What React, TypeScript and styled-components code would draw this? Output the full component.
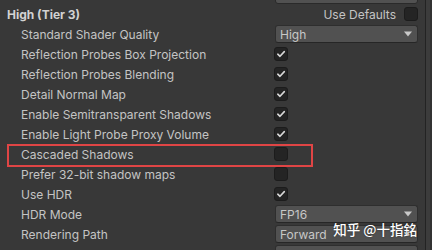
import { styled, createGlobalStyle } from "styled-components";

const GlobalStyle = createGlobalStyle`
  html, body {
    margin: 0;
    padding: 0;
    background: #383838;
  }
  body {
    font-family: Inter, "Noto Sans", "Noto Sans CJK SC", sans-serif;
  }
`;

type Field =
  | { kind: "check"; checked: boolean }
  | { kind: "select"; value: string; arrow?: boolean };

type Setting = { label: string; field: Field; highlight?: boolean };

const settings: Setting[] = [
  { label: "Standard Shader Quality", field: { kind: "select", value: "High" } },
  { label: "Reflection Probes Box Projection", field: { kind: "check", checked: true } },
  { label: "Reflection Probes Blending", field: { kind: "check", checked: true } },
  { label: "Detail Normal Map", field: { kind: "check", checked: true } },
  { label: "Enable Semitransparent Shadows", field: { kind: "check", checked: true } },
  { label: "Enable Light Probe Proxy Volume", field: { kind: "check", checked: true } },
  { label: "Cascaded Shadows", field: { kind: "check", checked: false }, highlight: true },
  { label: "Prefer 32-bit shadow maps", field: { kind: "check", checked: false } },
  { label: "Use HDR", field: { kind: "check", checked: true } },
  { label: "HDR Mode", field: { kind: "select", value: "FP16" } },
  { label: "Rendering Path", field: { kind: "select", value: "Forward", arrow: false } },
  { label: "", field: { kind: "select", value: "Vertex", arrow: false } },
];

function Check({ checked }: { checked: boolean }) {
  return (
    <CheckBox>
      {checked && (
        <svg width="10" height="10" viewBox="0 0 10 10">
          <path d="M1.8 5.2 L4 7.3 L8.3 2.6" fill="none" stroke="#d8d8d8" strokeWidth="1.6" strokeLinecap="round" strokeLinejoin="round" />
        </svg>
      )}
    </CheckBox>
  );
}

function Select({ value, arrow = true }: { value: string; arrow?: boolean }) {
  return (
    <SelectBox>
      <span>{value}</span>
      {arrow && (
        <svg width="8" height="6" viewBox="0 0 8 6">
          <path d="M0 0.5 H8 L4 5.5 Z" fill="#c8c8c8" />
        </svg>
      )}
    </SelectBox>
  );
}

export default function App() {
  return (
    <>
      <GlobalStyle />
      <Window>
        <Inspector>
          <TopStub>
            <StubSpacer />
            <StubField />
          </TopStub>
          <Row>
            <Heading>High (Tier 3)</Heading>
            <DefaultsLabel>Use Defaults</DefaultsLabel>
            <CheckBox />
          </Row>
          {settings.map((s, i) => (
            <Row key={i}>
              <Label>{s.label}</Label>
              <Value>
                {s.field.kind === "check" ? (
                  <Check checked={s.field.checked} />
                ) : (
                  <Select value={s.field.value} arrow={s.field.arrow} />
                )}
              </Value>
              {s.highlight && <Highlight />}
            </Row>
          ))}
          <Watermark>知乎 @十指銘</Watermark>
        </Inspector>
        <Scrollbar />
      </Window>
    </>
  );
}

const Window = styled.div({
  display: "flex",
  width: 432,
  height: 250,
  overflow: "hidden",
  background: "#383838",
});

const Inspector = styled.div({
  position: "relative",
  flex: 1,
  display: "flex",
  flexDirection: "column",
  paddingRight: 7,
});

const Scrollbar = styled.div({
  width: 6,
  borderLeft: "1px solid #232323",
  background: "#3c3c3c",
  boxShadow: "inset -2px 0 0 #333333",
});

const TopStub = styled.div({
  display: "flex",
  flexShrink: 0,
  height: 4,
  overflow: "hidden",
  alignItems: "flex-end",
});

const StubSpacer = styled.div({
  flex: 1,
});

const StubField = styled.div({
  width: 143,
  height: 18,
  borderRadius: 3,
  background: "#515151",
  border: "1px solid #2a2a2a",
  boxSizing: "border-box",
});

const Row = styled.div({
  position: "relative",
  display: "flex",
  flexShrink: 0,
  alignItems: "center",
  height: 20,
  fontSize: 12,
  color: "#c4c4c4",
});

const Heading = styled.div({
  flex: 1,
  paddingLeft: 7,
  fontWeight: 700,
  color: "#d2d2d2",
});

const DefaultsLabel = styled.div({
  marginRight: 9,
});

const Label = styled.div({
  flex: 1,
  paddingLeft: 21,
  whiteSpace: "nowrap",
});

const Value = styled.div({
  width: 143,
  display: "flex",
  alignItems: "center",
});

const CheckBox = styled.div({
  width: 14,
  height: 14,
  boxSizing: "border-box",
  borderRadius: 3,
  background: "#242424",
  border: "1px solid #1c1c1c",
  display: "flex",
  alignItems: "center",
  justifyContent: "center",
  marginLeft: -1,
});

const SelectBox = styled.div({
  flex: 1,
  height: 18,
  boxSizing: "border-box",
  display: "flex",
  alignItems: "center",
  justifyContent: "space-between",
  padding: "0 5px 0 4px",
  borderRadius: 3,
  background: "#515151",
  border: "1px solid #2e2e2e",
  borderBottomColor: "#262626",
  color: "#c8c8c8",
  fontSize: 12,
});

const Highlight = styled.div({
  position: "absolute",
  left: 7,
  top: 0,
  width: 306,
  height: 23,
  boxSizing: "border-box",
  border: "2.5px solid #e04545",
});

const Watermark = styled.div({
  position: "absolute",
  right: 8,
  top: 219,
  fontSize: 13.5,
  fontWeight: 500,
  color: "#ffffff",
  fontFamily: '"Noto Sans CJK SC", sans-serif',
  textShadow: "0 0 2px rgba(0,0,0,0.5)",
});
